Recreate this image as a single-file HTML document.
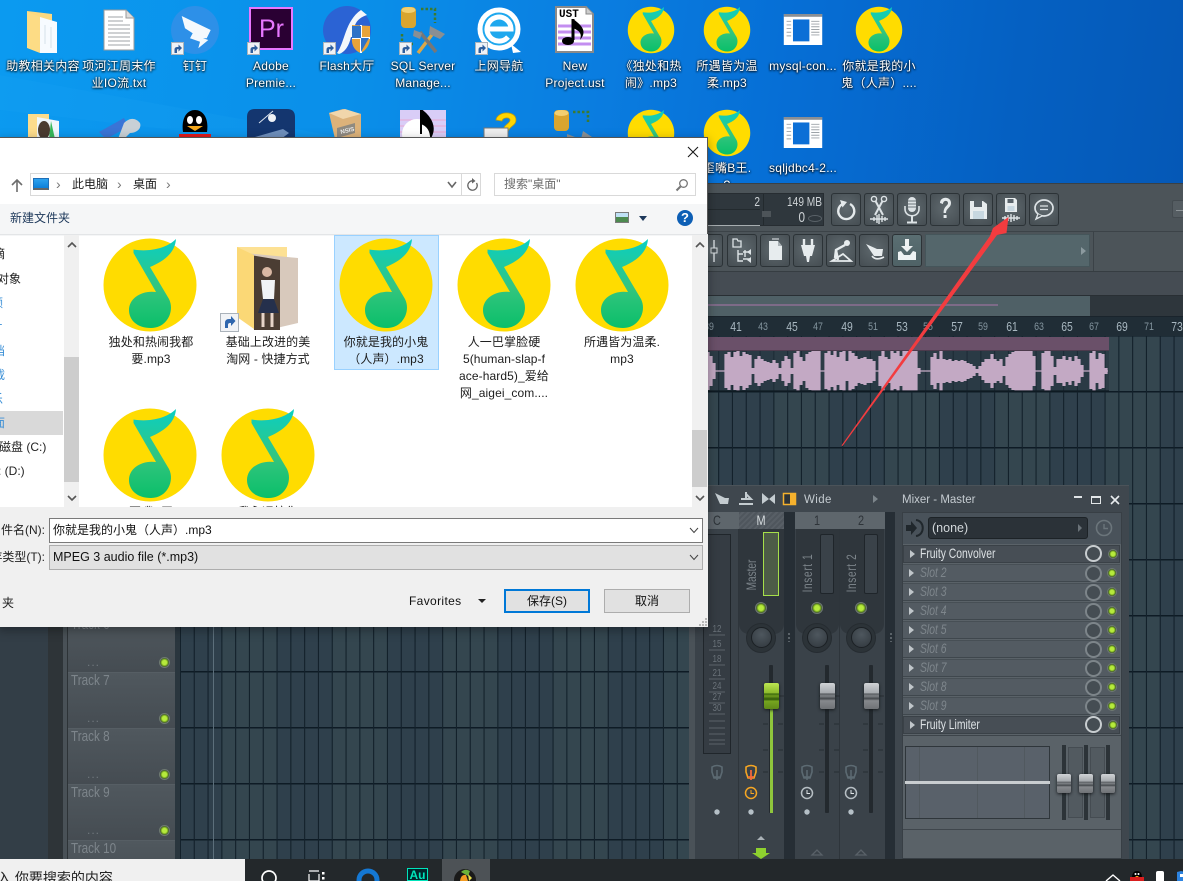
<!DOCTYPE html>
<html lang="zh">
<head>
<meta charset="utf-8">
<title>FL Studio</title>
<style>
html,body{margin:0;padding:0;width:1183px;height:881px;overflow:hidden;background:#0a7fe0}
*{box-sizing:border-box}
#s{position:relative;width:1183px;height:881px;overflow:hidden;font:12px "Liberation Sans","Noto Sans CJK SC",sans-serif;color:#222}
.a,svg.a{position:absolute;display:block}
.dl{position:absolute;width:76px;text-align:center;color:#fff;font-size:12px;line-height:17px;text-shadow:0 1px 2px #000,0 0 2px rgba(0,0,0,.85);white-space:nowrap;letter-spacing:.25px}
.fl{position:absolute;width:110px;text-align:center;color:#1c1c1c;font-size:12px;line-height:17px;white-space:nowrap;letter-spacing:.1px}
.nv{position:absolute;left:-40px;width:60px;text-align:right;color:#222;font-size:12px;line-height:16px;white-space:nowrap}
.tb{position:absolute;width:30px;height:33px;border:1px solid #2c3337;border-radius:3px;background:radial-gradient(circle at 50% 45%,#5f696e,#454d52)}
.tb svg{position:absolute;left:0;top:0;width:28px;height:31px}
.n{transform:scaleX(.78)}
.led{position:absolute;width:11px;height:11px;border-radius:50%;background:radial-gradient(circle,#b6ea3c 0 35%,#6d9c1e 55%,#3c4a3a 70%);border:1px solid #6f7a72}
.tn{position:absolute;top:317px;width:24px;text-align:center;color:#a9b8c1;font-size:13px;line-height:19px;transform:scaleX(.8)}
.tn.s{font-size:11px;color:#84959f;line-height:20px}
.trk{position:absolute;left:68px;width:107px;height:56px;background:linear-gradient(#50585e,#454c52);border-top:1px solid #565e64}
.trk b{position:absolute;left:3px;top:-1px;font-weight:400;font-size:15px;line-height:17px;color:#7d858b;transform:scaleX(.78);transform-origin:left;white-space:nowrap}
.trk i{position:absolute;left:19px;top:40px;font:400 12px/10px "Liberation Sans";color:#6f777d;letter-spacing:1px}
.sl{position:absolute;left:903px;width:217px;height:18px;background:#535b62;border-top:1px solid #474f55;border-bottom:1px solid #3f474d}
.sl.on{background:#474e55;border:1px solid #3a4147}
.sl span{position:absolute;left:17px;top:-2px;font-style:italic;font-size:14px;line-height:18px;color:#7e868c;transform:scaleX(.74);transform-origin:left;white-space:nowrap}
.sl.on span{font-style:normal;color:#dce1e4;left:16px;top:-2px}
.sl u{position:absolute;left:6px;top:4px;width:0;height:0;border-left:5px solid #c0c6ca;border-top:4px solid transparent;border-bottom:4px solid transparent}
.sl s{position:absolute;left:182px;top:0;width:17px;height:17px;border-radius:50%;border:2px solid #7d858a;background:#454d53}
.sl.on s{border-color:#c8cdd0;left:181px;top:-1px}
.sl .led{left:204px;top:3px;width:10px;height:10px}
.hd{position:absolute;width:15px;height:26px;border-radius:2px;box-shadow:0 1px 3px #15191c;background:linear-gradient(#d0d3d6 0,#a6aaae 38%,#5a5e62 42%,#7e8286 50%,#45494d 60%,#86898d 68%,#6f7276 100%)}
.hd.g{background:linear-gradient(#bde652 0,#8dbb2c 38%,#3c6a0c 42%,#6f9c1d 50%,#2f5808 62%,#76a41f 70%,#5f8a18 100%)}
.sc{position:absolute;font-size:10px;line-height:11px;color:#6a7279;width:20px;text-align:center;left:707px;transform:scaleX(.8)}
.vt{position:absolute;font-size:14px;line-height:14px;color:#7b8389;transform:rotate(-90deg) scaleX(.72);white-space:nowrap;width:70px;text-align:center}
</style>
</head>
<body>
<div id="s">
<svg width="0" height="0" style="position:absolute">
<defs>
<linearGradient id="ng" gradientUnits="userSpaceOnUse" x1="0" y1="-46" x2="0" y2="43"><stop offset="0" stop-color="#0acfc4"/><stop offset=".55" stop-color="#33c57e"/><stop offset="1" stop-color="#0abf6a"/></linearGradient>
<symbol id="qq" viewBox="-50 -50 100 100" overflow="visible"><circle r="46.5" fill="#ffdc00"/><path d="M-16.5-35.5C-2-33 16-36 26-46C25-31 12-23 0-18L19 14C25 26 17 43 1 43C-13 43-21 35-21 25C-21 13-8 5 6 7L-16.5-32Z" fill="url(#ng)"/></symbol>
<symbol id="win" viewBox="0 0 42 34"><rect width="42" height="34" fill="#c5cacf"/><rect y="3" width="42" height="31" fill="#fff"/><rect width="42" height="3" fill="#8b8f94"/><rect x="10" y="6" width="18" height="24" fill="#0c6fd6"/><path d="M3 8h5M3 12h5M3 16h5M3 20h5M3 24h5M30 8h9M30 11h9M30 14h9M30 17h9M30 20h9M30 23h9" stroke="#9da3a8"/></symbol>
<symbol id="bd" viewBox="0 0 13 13"><rect x=".5" y=".5" width="12" height="12" fill="#eef2f6" stroke="#a9b3bb"/><path d="M3.5 11V7.5Q3.5 5 6.5 5H7.5V2.5L11 6L7.5 9.5V7H7Q6 7 6 8.5V11Z" fill="#2d5f9e"/></symbol>
</defs>
</svg>

<!-- desktop -->
<div class="a" style="left:0;top:0;width:1183px;height:200px;background:linear-gradient(98deg,#0b9af0 0,#0a8fe9 30%,#0a7de0 50%,#066fd6 65%,#0560c2 85%,#0558b6 100%)"></div>
<svg class="a" style="left:0;top:0" width="1183" height="200"><path d="M0 75L520 170L0 110Z" fill="#1ba6f3" opacity=".18"/></svg>

<!-- row 1 icons -->
<svg class="a" style="left:26px;top:10px" width="34" height="46" viewBox="0 0 34 46"><path d="M1 1L26 4V12L1 12Z" fill="#fdd97f"/><path d="M14 7L31 12V43L14 43Z" fill="#f7fbff"/><path d="M1 2L14 7V43L1 38Z" fill="#fddc85"/><path d="M19 15V34M25 17V38" stroke="#d5e0ea"/></svg>
<svg class="a" style="left:103px;top:9px" width="32" height="42" viewBox="0 0 32 42"><path d="M1 1H23L31 9V41H1Z" fill="#fff" stroke="#9a9a9a"/><path d="M23 1V9H31" fill="#ddd" stroke="#999"/><path d="M5 8H20M5 12H20M5 16H27M5 20H27M5 24H27M5 28H27M5 32H27M5 36H27" stroke="#9fa3a7"/></svg>
<svg class="a" style="left:171px;top:6px" width="48" height="48" viewBox="0 0 48 48"><circle cx="24" cy="24" r="24" fill="#2d90e8"/><path d="M10.7 10L39.7 24L35.7 32.3L32 32.3L37.3 34L27.3 42.3L29 35.7L19 32.3L21.7 27.3L14 22.3Z" fill="#f5f9fd"/></svg>
<svg class="a" style="left:171px;top:42px" width="13" height="13"><use href="#bd"/></svg>
<svg class="a" style="left:249px;top:7px" width="44" height="43" viewBox="0 0 44 43"><rect x="1" y="1" width="42" height="41" fill="#2a0033" stroke="#e877ff" stroke-width="2"/><text x="10" y="30" font-family="Liberation Sans" font-size="25" fill="#e877ff">Pr</text></svg>
<svg class="a" style="left:247px;top:42px" width="13" height="13"><use href="#bd"/></svg>
<svg class="a" style="left:323px;top:6px" width="48" height="48" viewBox="0 0 48 48"><circle cx="24" cy="24" r="24" fill="#2b63d4"/><path d="M14 47C22 36 22 15 38 4L44 9C32 13 32 20 30 25L35 25L30 31L28 31C26 40 22 46 16 48Z" fill="#f3f7fb"/><path d="M29 19L47 20V32C47 41 40 46 38 47C34 46 28 41 29 32Z" fill="#e8a33a"/><path d="M38 19V47M29 32H47" stroke="#fff" stroke-width="2"/><path d="M29 20H38V32H29ZM38 32H46L38 46Z" fill="#2e72c8"/></svg>
<svg class="a" style="left:323px;top:42px" width="13" height="13"><use href="#bd"/></svg>
<svg class="a" style="left:399px;top:6px" width="50" height="50" viewBox="0 0 50 50"><rect x="2" y="1" width="15" height="21" rx="4" fill="#d9a52f"/><ellipse cx="9.5" cy="4" rx="7" ry="3" fill="#f2cf70"/><path d="M22 3H36V17M3 28V35M8 38H14" fill="none" stroke="#3c7a30" stroke-width="2.5" stroke-dasharray="2.5 2"/><path d="M19 47L35 26" stroke="#d9a74a" stroke-width="3.5"/><path d="M37 46L21 26" stroke="#777" stroke-width="3.5"/><path d="M15 24L23 27L21 33L14 30ZM31 20L46 28L41 33L30 28Z" fill="#8a8f93"/></svg>
<svg class="a" style="left:399px;top:42px" width="13" height="13"><use href="#bd"/></svg>
<svg class="a" style="left:477px;top:6px" width="48" height="48" viewBox="0 0 48 48"><circle cx="22" cy="23" r="19" fill="#1fa8ee" stroke="#fff" stroke-width="5"/><path d="M10 23H34A12 12 0 1 0 31 31" fill="none" stroke="#fff" stroke-width="5"/><path d="M34 38L44 46L36 47Z" fill="#fff"/></svg>
<svg class="a" style="left:475px;top:42px" width="13" height="13"><use href="#bd"/></svg>
<svg class="a" style="left:555px;top:6px" width="39" height="47" viewBox="0 0 39 47"><path d="M1 1H31L38 8V46H1Z" fill="#fff" stroke="#8a8a8a" stroke-width="2"/><path d="M31 1V8H38" fill="#ccc" stroke="#888"/><path d="M3 20H36M3 26H36M3 32H36M3 38H36" stroke="#c38ef0" stroke-width="3"/><text x="4" y="11" font-family="Liberation Mono" font-weight="700" font-size="11" fill="#000">UST</text><path d="M18 13V34" stroke="#000" stroke-width="3"/><ellipse cx="13" cy="35" rx="6" ry="4" fill="#000"/><path d="M18 13C28 20 32 26 25 34C28 26 22 24 18 22Z" fill="#000"/></svg>
<svg class="a" style="left:626px;top:5px" width="50" height="50"><use href="#qq"/></svg>
<svg class="a" style="left:702px;top:5px" width="50" height="50"><use href="#qq"/></svg>
<svg class="a" style="left:782px;top:14px" width="42" height="31"><use href="#win"/></svg>
<svg class="a" style="left:854px;top:5px" width="50" height="50"><use href="#qq"/></svg>

<div class="dl" style="left:5px;top:58px">助教相关内容</div>
<div class="dl" style="left:81px;top:58px">项河江周末作<br>业IO流.txt</div>
<div class="dl" style="left:157px;top:58px">钉钉</div>
<div class="dl" style="left:233px;top:58px">Adobe<br>Premie...</div>
<div class="dl" style="left:309px;top:58px">Flash大厅</div>
<div class="dl" style="left:385px;top:58px">SQL Server<br>Manage...</div>
<div class="dl" style="left:461px;top:58px">上网导航</div>
<div class="dl" style="left:537px;top:58px">New<br>Project.ust</div>
<div class="dl" style="left:613px;top:58px">《独处和热<br>闹》.mp3</div>
<div class="dl" style="left:689px;top:58px">所遇皆为温<br>柔.mp3</div>
<div class="dl" style="left:765px;top:58px">mysql-con...</div>
<div class="dl" style="left:841px;top:58px">你就是我的小<br>鬼（人声）....</div>

<!-- row 2 icons -->
<svg class="a" style="left:27px;top:113px" width="34" height="26" viewBox="0 0 34 26"><path d="M1 1H22V26H1Z" fill="#fcdc8c"/><path d="M10 4L32 8V26H10Z" fill="#eef6fb"/><ellipse cx="17" cy="17" rx="6" ry="9" fill="#4a3b30"/><path d="M24 8L28 26H22Z" fill="#36b85a"/></svg>
<svg class="a" style="left:98px;top:115px" width="44" height="24" viewBox="0 0 44 24"><path d="M1 17L26 3L30 12L8 24Z" fill="#3a74d6"/><path d="M26 8C32 2 38 3 42 8C44 14 38 18 32 18L26 24H20Z" fill="#c8d0d6"/></svg>
<svg class="a" style="left:176px;top:110px" width="38" height="30" viewBox="0 0 38 30"><path d="M7 22C5 8 11 0 19 0S33 8 31 22Z" fill="#000"/><ellipse cx="14" cy="10" rx="3" ry="4" fill="#fff"/><ellipse cx="23" cy="10" rx="3" ry="4" fill="#fff"/><path d="M11 16H27L19 21Z" fill="#f5a81c"/><path d="M3 30V24H35V30Z" fill="#e11a1a"/></svg>
<svg class="a" style="left:247px;top:109px" width="48" height="30" viewBox="0 0 48 30"><path d="M8 0H40Q48 0 48 8V30H0V8Q0 0 8 0Z" fill="#14366f"/><circle cx="25" cy="9" r="4" fill="#eef2f7"/><path d="M8 28L36 20L42 24L34 30H8Z" fill="#6f8fbc"/><path d="M12 14L26 2" stroke="#dbe4ee"/></svg>
<svg class="a" style="left:325px;top:109px" width="44" height="30" viewBox="0 0 44 30"><path d="M4 4L18 0L36 5L36 30H10Z" fill="#dcb27a"/><path d="M4 4L18 10L36 5L20 0Z" fill="#f1d6ab"/><path d="M12 19L30 14V24L12 29Z" fill="#8f8a80"/><text x="16" y="25" font-size="6" font-family="Liberation Sans" font-weight="700" fill="#eee" transform="rotate(-14 16 25)">NSIS</text></svg>
<svg class="a" style="left:400px;top:110px" width="46" height="30" viewBox="0 0 46 30"><rect width="46" height="30" fill="#d9cdf7"/><path d="M0 10H46M0 16H46M0 22H46" stroke="#e8a7d2"/><circle cx="17" cy="24" r="15" fill="#fff"/><path d="M21 0V24M21 0C32 8 35 18 31 26C30 18 26 15 21 13Z" fill="#000" stroke="#000" stroke-width="2"/></svg>
<svg class="a" style="left:483px;top:112px" width="36" height="27" viewBox="0 0 36 27"><path d="M13 8C14-1 33-2 33 8C33 14 26 14 25 20H20C20 12 27 12 27 8C27 5 20 5 19 9Z" fill="#ffd500" stroke="#b79a16" stroke-width=".8"/><rect x="1" y="16" width="24" height="11" fill="#eeeeee" stroke="#777"/></svg>
<svg class="a" style="left:553px;top:109px" width="46" height="30" viewBox="0 0 46 30"><rect x="1" y="1" width="15" height="21" rx="4" fill="#d9a52f"/><ellipse cx="8.5" cy="4" rx="7" ry="3" fill="#f2cf70"/><path d="M20 3H35V15" stroke="#3c7a30" stroke-width="2.5" stroke-dasharray="2.5 2" fill="none"/><path d="M14 25L22 28L18 30H14ZM30 22L42 30H28Z" fill="#8a8f93"/></svg>
<svg class="a" style="left:626px;top:108px" width="50" height="50"><use href="#qq"/></svg>
<svg class="a" style="left:702px;top:108px" width="50" height="50"><use href="#qq"/></svg>
<svg class="a" style="left:782px;top:117px" width="42" height="31"><use href="#win"/></svg>
<div class="dl" style="left:689px;top:160px">歪嘴B王.<br>?</div>
<div class="dl" style="left:765px;top:160px">sqljdbc4-2...</div>

<!-- FL: grid -->
<div class="a" style="left:0;top:336px;width:1183px;height:523px;background-color:#31434f;background-image:linear-gradient(#0e1b25 1.3px,transparent 1.3px),linear-gradient(90deg,#34464f 50%,#2f404c 50%);background-size:100% 56px,110.4px 100%;background-position:0 55px,.5px 0"></div>
<svg class="a" style="left:0;top:336px" width="1183" height="523"><path d="M0 261.5H1183" stroke="#13212b" stroke-width="523" stroke-dasharray="1.1 12.7" stroke-dashoffset="-0.5" fill="none"/></svg>

<!-- FL: toolbar -->
<div class="a" style="left:0;top:183px;width:1183px;height:48px;background:#4c5459;border-top:1px solid #3a4146"></div>
<div class="a" style="left:0;top:231px;width:1183px;height:40px;background:#4c5459;border-top:1px solid #3c4348"></div>
<div class="a" style="left:0;top:271px;width:1183px;height:25px;background:#454c53;border-top:1px solid #363d42;border-bottom:1px solid #292f34"></div>
<div class="a" style="left:0;top:296px;width:1090px;height:20px;background:#4f6066"></div>
<div class="a" style="left:1090px;top:296px;width:93px;height:20px;background:#2e363c"></div>
<div class="a" style="left:700px;top:304px;width:298px;height:2px;background:#7d6b88"></div>
<div class="a" style="left:0;top:316px;width:1183px;height:20px;background:#202d36;border-top:1px solid #1a242c"></div>
<div class="a" style="left:1093px;top:231px;width:1px;height:40px;background:#3b4247"></div>

<!-- display -->
<div class="a" style="left:700px;top:193px;width:124px;height:33px;background:#2f373d;border:1px solid #272d32"></div>
<div class="a" style="left:700px;top:209px;width:60px;height:1px;background:#232a2e"></div>
<div class="a" style="left:763px;top:194px;width:1px;height:31px;background:#232a2e"></div>
<div class="a" style="left:700px;top:225px;width:60px;height:1px;background:#a7adb0"></div>
<div class="a n" style="left:748px;top:194px;width:12px;font-size:13px;line-height:15px;color:#cdd2d5;text-align:right;transform-origin:right">2</div>
<div class="a n" style="left:770px;top:194px;width:52px;font-size:13px;line-height:15px;color:#cdd2d5;text-align:right;transform-origin:right">149 MB</div>
<div class="a n" style="left:790px;top:210px;width:15px;font-size:15px;line-height:16px;color:#cdd2d5;text-align:right;transform-origin:right">0</div>
<div class="a" style="left:808px;top:215px;width:14px;height:7px;border:1.5px solid #5a6268;border-radius:50%"></div>
<div class="a" style="left:762px;top:211px;width:9px;height:6px;background:#4d5459"></div>

<!-- toolbar row 1 -->
<div class="tb" style="left:831px;top:193px"><svg viewBox="0 0 28 31"><path d="M10.5 10A8 8 0 1 0 18 10" fill="none" stroke="#e5eaec" stroke-width="2.4"/><path d="M8 6L15 8L10.5 13.5Z" fill="#e5eaec"/></svg></div>
<div class="tb" style="left:864px;top:193px"><svg viewBox="0 0 28 31"><circle cx="9" cy="5" r="2.6" fill="none" stroke="#dde3e6" stroke-width="1.4"/><circle cx="19" cy="5" r="2.6" fill="none" stroke="#dde3e6" stroke-width="1.4"/><path d="M10.5 7L18 21M17.5 7L10 21" stroke="#dde3e6" stroke-width="2"/><path d="M5 25H23M9 23V27M12 21V29M14 20V30M17 22V28M20 23V27" stroke="#dde3e6" stroke-width="1.4"/></svg></div>
<div class="tb" style="left:897px;top:193px"><svg viewBox="0 0 28 31"><rect x="10" y="3" width="8" height="15" rx="4" fill="#dde3e6"/><path d="M10 7H18M10 10H18M10 13H18" stroke="#6b7479"/><path d="M7 12V15C7 24 21 24 21 15V12" fill="none" stroke="#dde3e6" stroke-width="1.6"/><path d="M14 22V28M9 28.5H19" stroke="#dde3e6" stroke-width="2"/></svg></div>
<div class="tb" style="left:930px;top:193px"><svg viewBox="0 0 28 31"><path d="M9 9C9 2 20 2 20 9C20 14 15 14 15 19H12.6C12.6 12 17 12 17 9C17 6 12 6 12 10Z" fill="#e5eaec"/><rect x="12.6" y="21" width="3" height="3" fill="#e5eaec"/></svg></div>
<div class="tb" style="left:963px;top:193px"><svg viewBox="0 0 28 31"><path d="M6 7H19L23 10V25H6Z" fill="#e7ecee"/><rect x="10" y="7" width="8" height="6" fill="#59636a"/><rect x="9" y="17" width="11" height="8" fill="#c7d7e0"/></svg></div>
<div class="tb" style="left:996px;top:193px"><svg viewBox="0 0 28 31"><path d="M8 4H18L20 6V18H8Z" fill="#e7ecee"/><rect x="10.5" y="5" width="6" height="4" fill="#59636a"/><rect x="10.5" y="12" width="7" height="5" fill="#c7d7e0"/><path d="M5 24H23M8 22V26M11 21V27M14 20V28M17 21V27M20 22V26" stroke="#dde3e6" stroke-width="1.4"/></svg></div>
<div class="tb" style="left:1029px;top:193px"><svg viewBox="0 0 28 31"><ellipse cx="14" cy="14" rx="9" ry="8" fill="none" stroke="#dde3e6" stroke-width="1.7"/><path d="M10 12H18M10 15.5H18" stroke="#dde3e6" stroke-width="1.3"/><path d="M8 20L6 25L12 22" fill="#4c5459" stroke="#dde3e6" stroke-width="1.4"/></svg></div>
<div class="a" style="left:1172px;top:200px;width:14px;height:18px;background:#555d62;border:1px solid #444b50;border-radius:2px"></div>
<div class="a" style="left:1176px;top:210px;width:7px;height:1px;background:#8d9498"></div>

<!-- toolbar row 2 -->
<div class="tb" style="left:693px;top:234px"><svg viewBox="0 0 28 31"><path d="M20 5V27" stroke="#d9dfe2" stroke-width="1.4"/><rect x="17" y="13" width="6" height="5" fill="#4c5459" stroke="#d9dfe2"/></svg></div>
<div class="tb" style="left:727px;top:234px"><svg viewBox="0 0 28 31"><path d="M5 4H9L10 6H13V12H5Z" fill="none" stroke="#dde3e6" stroke-width="1.3"/><path d="M10 15V26H15M10 19H15M17 15V22M22 17H15M22 24H15" fill="none" stroke="#dde3e6" stroke-width="1.4"/><path d="M19 17L23 14V20ZM19 25L23 22V28Z" fill="#dde3e6"/></svg></div>
<div class="tb" style="left:760px;top:234px"><svg viewBox="0 0 28 31"><path d="M8 6H17L21 11V25H8Z" fill="#e7ecee"/><path d="M11 4H18" stroke="#e7ecee"/><path d="M17 6V11H21" fill="#aab2b6"/></svg></div>
<div class="tb" style="left:793px;top:234px"><svg viewBox="0 0 28 31"><path d="M10 4V10M18 4V10" stroke="#e7ecee" stroke-width="2.4"/><path d="M7 10H21L18 21H16L15 27H13L12 21H10Z" fill="#e7ecee"/></svg></div>
<div class="tb" style="left:826px;top:234px"><svg viewBox="0 0 28 31"><circle cx="20" cy="8" r="3" fill="#e7ecee"/><path d="M18 10L9 15L8 23M9 15L11 25" stroke="#e7ecee" stroke-width="2.4" fill="none"/><path d="M5 26H24L16 19Z" fill="none" stroke="#e7ecee" stroke-width="1.8"/></svg></div>
<div class="tb" style="left:859px;top:234px"><svg viewBox="0 0 28 31"><path d="M6 9L17 14H23L22 21H14Z" fill="#e7ecee"/><path d="M12 21C15 25 20 24 24 22" fill="none" stroke="#e7ecee" stroke-width="1.6"/></svg></div>
<div class="tb" style="left:892px;top:234px;background:linear-gradient(#5a6e72,#4f6266)"><svg viewBox="0 0 28 31"><path d="M12 4H16V11H20L14 17L8 11H12Z" fill="#eef2f3"/><path d="M5 17V25H23V17L20 16L17 20H11L8 16Z" fill="#eef2f3"/></svg></div>
<div class="a" style="left:925px;top:234px;width:165px;height:33px;background:#54666b;border:1px solid #45555a"></div>
<div class="a" style="left:1081px;top:247px;width:0;height:0;border-left:5px solid #8b9a9f;border-top:4px solid transparent;border-bottom:4px solid transparent"></div>

<!-- timeline -->
<div class="tn s" style="left:697px">39</div><div class="tn" style="left:724px">41</div><div class="tn s" style="left:751px">43</div><div class="tn" style="left:780px">45</div><div class="tn s" style="left:806px">47</div><div class="tn" style="left:835px">49</div><div class="tn s" style="left:861px">51</div><div class="tn" style="left:890px">53</div><div class="tn s" style="left:916px">55</div><div class="tn" style="left:945px">57</div><div class="tn s" style="left:971px">59</div><div class="tn" style="left:1000px">61</div><div class="tn s" style="left:1027px">63</div><div class="tn" style="left:1055px">65</div><div class="tn s" style="left:1082px">67</div><div class="tn" style="left:1110px">69</div><div class="tn s" style="left:1137px">71</div><div class="tn" style="left:1165px">73</div>

<!-- clip -->
<div class="a" style="left:700px;top:337px;width:409px;height:14px;background:#6a5069;border-bottom:1px solid #4c3a4c"></div>
<div class="a" style="left:700px;top:351px;width:409px;height:40px;background:#27353f;opacity:.55"></div>
<svg class="a" style="left:0;top:0" width="1183" height="400">
<path d="M700 371H1108" stroke="#c5acc6" stroke-width="1.2"/>
<path fill="none" stroke="#c3a9c4" stroke-width="3.2" d="M708 352v38M711 356v30M714 363v16M726 354v34M729 352v38M732 357v28M735 352v38M738 351v40M741 356v30M744 352v38M747 354v34M750 355v30M753 368v6M756 359v24M759 356v30M762 359v24M765 361v20M768 362v18M771 363v16M774 360v22M777 363v16M780 368v6M783 361v20M786 356v30M789 359v24M792 368v6M795 353v36M798 351v40M801 357v28M804 361v20M807 354v34M810 352v38M813 351v40M816 351v40M819 351v40M826 353v36M829 351v40M832 355v32M835 351v40M838 357v28M841 352v38M844 351v40M847 361v20M850 351v40M853 353v36M856 356v30M859 359v24M862 358v26M865 357v28M868 359v24M871 359v24M874 361v20M880 356v30M883 351v40M886 357v28M889 359v24M892 351v40M895 353v36M898 351v40M901 356v30M904 351v40M907 351v40M910 351v40M913 351v40M916 351v40M919 368v6M932 357v28M935 353v36M938 359v24M941 351v40M944 359v24M947 360v22M950 359v24M953 361v20M956 360v22M959 361v20M962 360v22M965 361v20M968 363v16M971 364v14M974 366v10M977 369v4M980 366v10M983 362v18M986 359v24M989 359v24M992 354v34M995 359v24M998 361v20M1001 359v24M1004 366v10M1007 357v28M1010 354v34M1013 352v38M1016 351v40M1019 351v40M1022 351v40M1025 351v40M1028 351v40M1031 351v40M1034 356v30M1043 353v36M1046 351v40M1049 351v40M1052 356v30M1055 367v8M1058 359v24M1061 359v24M1064 356v30M1067 360v22M1070 357v28M1073 361v20M1076 356v30M1079 359v24M1082 365v12M1091 353v36M1094 351v40M1097 359v24M1100 353v36M1103 354v34M1106 368v6"/>
<path d="M700 391H1109" stroke="#0f1a22" stroke-width="1.3"/>
</svg>

<!-- left tracks -->
<div class="a" style="left:0;top:600px;width:48px;height:259px;background:#333e47"></div>
<div class="a" style="left:48px;top:600px;width:15px;height:259px;background:#2e3438"></div>
<div class="a" style="left:63px;top:600px;width:5px;height:259px;background:#495157;border-right:1px solid #2d3337"></div>
<div class="a" style="left:175px;top:600px;width:5px;height:259px;background:#2a363e"></div>
<div class="a" style="left:213px;top:600px;width:1px;height:259px;background:#5c6f7b"></div>
<div class="trk" style="top:616px"><b>Track 6</b><i>...</i></div>
<div class="trk" style="top:672px"><b>Track 7</b><i>...</i></div>
<div class="trk" style="top:728px"><b>Track 8</b><i>...</i></div>
<div class="trk" style="top:784px"><b>Track 9</b><i>...</i></div>
<div class="trk" style="top:840px"><b>Track 10</b></div>
<div class="led" style="left:159px;top:657px"></div>
<div class="led" style="left:159px;top:713px"></div>
<div class="led" style="left:159px;top:769px"></div>
<div class="led" style="left:159px;top:825px"></div>

<!-- mixer window -->
<div class="a" style="left:689px;top:485px;width:440px;height:374px;background:#3f474e;border-top:1px solid #4b5359"></div>
<div class="a" style="left:689px;top:512px;width:6px;height:347px;background:#4a5258"></div>
<svg class="a" style="left:708px;top:489px" width="100" height="20" viewBox="0 0 100 20"><path d="M7 4L17 9L21 9L20 15L12 15Z" fill="#c4ccd0"/><path d="M38 3V10M33 10H43L38 5M31 15H45" stroke="#c4ccd0" stroke-width="2" fill="none"/><path d="M54 4L61 10L54 15ZM67 5L61 10L67 15Z" fill="#c4ccd0"/><rect x="75.5" y="4.5" width="12" height="11" fill="#2e3439" stroke="#f5b12d" stroke-width="1.5"/><rect x="82" y="4" width="6" height="12" fill="#f5b12d"/></svg>
<div class="a" style="left:804px;top:493px;font-size:11.5px;line-height:14px;color:#c4cbd0;letter-spacing:.4px">Wide</div>
<div class="a" style="left:873px;top:495px;width:0;height:0;border-left:5px solid #7c858b;border-top:4px solid transparent;border-bottom:4px solid transparent"></div>
<div class="a" style="left:902px;top:493px;font-size:11.5px;line-height:14px;color:#c4cbd0">Mixer - Master</div>
<div class="a" style="left:1074px;top:496px;width:8px;height:2px;background:#dfe3e6"></div>
<div class="a" style="left:1091px;top:496px;width:10px;height:8px;border:1px solid #e2e6e8;border-top-width:2px"></div>
<svg class="a" style="left:1109px;top:494px" width="12" height="12"><path d="M2 2L10 10M10 2L2 10" stroke="#e8ecee" stroke-width="1.6"/></svg>

<!-- strips -->
<div class="a" style="left:695px;top:512px;width:89px;height:347px;background:#3a4249"></div>
<div class="a" style="left:795px;top:512px;width:90px;height:347px;background:#3a4249"></div>
<div class="a" style="left:695px;top:512px;width:44px;height:17px;background:#5e666c"></div>
<div class="a" style="left:739px;top:512px;width:45px;height:17px;background:repeating-linear-gradient(135deg,#4f565d 0 2px,#585f66 2px 4px)"></div>
<div class="a" style="left:795px;top:512px;width:90px;height:17px;background:#5e666c"></div>
<div class="a n" style="left:707px;top:512px;width:20px;text-align:center;font-size:14px;line-height:17px;color:#2e3439">C</div>
<div class="a n" style="left:751px;top:512px;width:20px;text-align:center;font-size:14px;line-height:17px;color:#d7dcdf">M</div>
<div class="a n" style="left:807px;top:512px;width:20px;text-align:center;font-size:14px;line-height:17px;color:#2e3439">1</div>
<div class="a n" style="left:851px;top:512px;width:20px;text-align:center;font-size:14px;line-height:17px;color:#2e3439">2</div>
<div class="a" style="left:784px;top:512px;width:11px;height:347px;background:#262e35"></div>
<div class="a" style="left:885px;top:512px;width:10px;height:347px;background:#262e35"></div>
<div class="a" style="left:788px;top:633px;width:2px;height:9px;background:repeating-linear-gradient(#5a6268 0 2px,transparent 2px 4px)"></div>
<div class="a" style="left:890px;top:633px;width:2px;height:9px;background:repeating-linear-gradient(#5a6268 0 2px,transparent 2px 4px)"></div>
<div class="a" style="left:738px;top:529px;width:1px;height:330px;background:#2e353b"></div>
<div class="a" style="left:839px;top:529px;width:1px;height:330px;background:#2e353b"></div>

<div class="a" style="left:739px;top:529px;width:45px;height:105px;background:#2f363c;border-radius:0 0 10px 10px"></div>
<div class="a" style="left:796px;top:529px;width:43px;height:105px;background:#2f363c;border-radius:0 0 10px 10px"></div>
<div class="a" style="left:840px;top:529px;width:44px;height:105px;background:#2f363c;border-radius:0 0 10px 10px"></div>

<div class="a" style="left:763px;top:532px;width:16px;height:64px;background:#4d5c47;border:1.5px solid #a6e04a"></div>
<div class="a" style="left:820px;top:534px;width:14px;height:60px;background:#3a4249;border:1.5px solid #1f252a;border-radius:2px"></div>
<div class="a" style="left:864px;top:534px;width:14px;height:60px;background:#3a4249;border:1.5px solid #1f252a;border-radius:2px"></div>
<div class="vt" style="left:716px;top:568px">Master</div>
<div class="vt" style="left:772px;top:566px;letter-spacing:.9px">Insert 1</div>
<div class="vt" style="left:816px;top:566px;letter-spacing:.9px">Insert 2</div>
<div class="led" style="left:755px;top:602px;width:12px;height:12px"></div>
<div class="led" style="left:811px;top:602px;width:12px;height:12px"></div>
<div class="led" style="left:855px;top:602px;width:12px;height:12px"></div>

<div class="a" style="left:746px;top:623px;width:30px;height:30px;border-radius:50%;background:#2c3338;border:1px solid #262c31"></div>
<div class="a" style="left:751px;top:627px;width:21px;height:21px;border-radius:50%;background:radial-gradient(circle at 50% 35%,#4e575e,#30373d);border:1px solid #1b2024"></div>
<div class="a" style="left:802px;top:623px;width:30px;height:30px;border-radius:50%;background:#2c3338;border:1px solid #262c31"></div>
<div class="a" style="left:807px;top:627px;width:21px;height:21px;border-radius:50%;background:radial-gradient(circle at 50% 35%,#4e575e,#30373d);border:1px solid #1b2024"></div>
<div class="a" style="left:846px;top:623px;width:30px;height:30px;border-radius:50%;background:#2c3338;border:1px solid #262c31"></div>
<div class="a" style="left:851px;top:627px;width:21px;height:21px;border-radius:50%;background:radial-gradient(circle at 50% 35%,#4e575e,#30373d);border:1px solid #1b2024"></div>

<!-- C meter -->
<div class="a" style="left:703px;top:534px;width:28px;height:220px;background:#353c43;border:1.5px solid #20262b"></div>
<div class="sc" style="top:624px">12</div><div class="sc" style="top:639px">15</div><div class="sc" style="top:654px">18</div><div class="sc" style="top:668px">21</div><div class="sc" style="top:681px">24</div><div class="sc" style="top:692px">27</div><div class="sc" style="top:703px">30</div>
<svg class="a" style="left:708px;top:620px" width="20" height="130"><path d="M1 15H17M1 30H17M1 45H17M1 59H17M1 72H17M1 83H17M1 94H17M1 101H17M1 108H17M1 114H17M1 120H17M1 124H17" stroke="#5a6268"/></svg>

<!-- fader tracks -->
<div class="a" style="left:769px;top:665px;width:4px;height:148px;background:#23292e;border-radius:1px"></div>
<div class="a" style="left:770px;top:700px;width:3px;height:113px;background:#8fc63c"></div>
<div class="a" style="left:825px;top:665px;width:4px;height:148px;background:#23292e;border-radius:1px"></div>
<div class="a" style="left:869px;top:665px;width:4px;height:148px;background:#23292e;border-radius:1px"></div>
<svg class="a" style="left:760px;top:690px" width="130" height="100"><path d="M3 6H24M3 34H8M18 34H23M3 60H8M18 60H23M3 82H8M18 82H23M59 6H80M59 34H64M74 34H79M59 60H64M74 60H79M59 82H64M74 82H79M103 6H124M103 34H108M118 34H123M103 60H108M118 60H123M103 82H108M118 82H123" stroke="#272d32"/></svg>
<div class="hd g" style="left:764px;top:683px"></div>
<div class="hd" style="left:820px;top:683px"></div>
<div class="hd" style="left:864px;top:683px"></div>

<!-- send / clock / dots -->
<svg class="a" style="left:700px;top:762px" width="170" height="60" viewBox="0 0 170 60">
<g fill="none" stroke="#5c6a72" stroke-width="1.6"><path d="M12 10V5Q17 2 22 5V10L20 16H14Z"/><path d="M102 10V5Q107 2 112 5V10L110 16H104Z"/><path d="M146 10V5Q151 2 156 5V10L154 16H148Z"/></g>
<path d="M46 10V5Q51 2 56 5V10L54 16H48Z" fill="none" stroke="#f5a623" stroke-width="1.6"/>
<path d="M17 8V18M14 15H20M107 8V18M104 15H110M151 8V18M148 15H154" stroke="#5c6a72" stroke-width="1.5"/>
<path d="M51 8V18M48 15H54" stroke="#f2683c" stroke-width="1.8"/>
<circle cx="51" cy="31" r="5.5" fill="none" stroke="#f5a623" stroke-width="1.5"/><path d="M51 28V31.5H54" stroke="#f5a623" fill="none"/>
<circle cx="107" cy="31" r="5.5" fill="none" stroke="#b7bfc4" stroke-width="1.5"/><path d="M107 28V31.5H110" stroke="#dfe4e6" fill="none"/>
<circle cx="151" cy="31" r="5.5" fill="none" stroke="#b7bfc4" stroke-width="1.5"/><path d="M151 28V31.5H154" stroke="#dfe4e6" fill="none"/>
<g fill="#b5c0c7"><circle cx="17" cy="50" r="2.7"/><circle cx="51" cy="50" r="2.7"/><circle cx="107" cy="50" r="2.7"/><circle cx="151" cy="50" r="2.7"/></g>
</svg>
<svg class="a" style="left:750px;top:830px" width="130" height="29" viewBox="0 0 130 29"><path d="M7 10L11 6L15 10Z" fill="#aab2b7"/><path d="M6 18H16V23H20L11 29L2 23H6Z" fill="#8ed12f"/><path d="M62 25L67 20L72 25ZM106 25L111 20L116 25Z" fill="none" stroke="#596168" stroke-width="1.3"/></svg>

<!-- slot panel -->
<div class="a" style="left:902px;top:512px;width:220px;height:347px;background:#5a6268;border:1px solid #383f45"></div>
<div class="a" style="left:903px;top:513px;width:218px;height:31px;background:#49525a"></div>
<svg class="a" style="left:905px;top:518px" width="20" height="20" viewBox="0 0 20 20"><path d="M1 7H6V3L12 10L6 17V13H1Z" fill="#20272c"/><path d="M11 2C20 3 20 17 11 18" fill="none" stroke="#20272c" stroke-width="2"/></svg>
<div class="a" style="left:928px;top:517px;width:160px;height:22px;background:#2b3238;border:1px solid #1d2327;border-radius:3px;color:#d2d7da;font-size:12.5px;line-height:20px;padding-left:3px">(none)</div>
<div class="a" style="left:1078px;top:524px;width:0;height:0;border-left:4px solid #6a7278;border-top:4px solid transparent;border-bottom:4px solid transparent"></div>
<svg class="a" style="left:1095px;top:519px" width="18" height="18"><circle cx="9" cy="9" r="7.5" fill="none" stroke="#6b757b" stroke-width="1.6"/><path d="M9 5V9.5H13" stroke="#6b757b" fill="none" stroke-width="1.4"/></svg>
<div class="sl on" style="top:545px"><u></u><span>Fruity Convolver</span><s></s><div class="led"></div></div>
<div class="sl" style="top:564px"><u></u><span>Slot 2</span><s></s><div class="led"></div></div>
<div class="sl" style="top:583px"><u></u><span>Slot 3</span><s></s><div class="led"></div></div>
<div class="sl" style="top:602px"><u></u><span>Slot 4</span><s></s><div class="led"></div></div>
<div class="sl" style="top:621px"><u></u><span>Slot 5</span><s></s><div class="led"></div></div>
<div class="sl" style="top:640px"><u></u><span>Slot 6</span><s></s><div class="led"></div></div>
<div class="sl" style="top:659px"><u></u><span>Slot 7</span><s></s><div class="led"></div></div>
<div class="sl" style="top:678px"><u></u><span>Slot 8</span><s></s><div class="led"></div></div>
<div class="sl" style="top:697px"><u></u><span>Slot 9</span><s></s><div class="led"></div></div>
<div class="sl on" style="top:716px"><u></u><span>Fruity Limiter</span><s></s><div class="led"></div></div>
<div class="a" style="left:903px;top:735px;width:218px;height:1px;background:#3d444a"></div>
<div class="a" style="left:905px;top:746px;width:145px;height:73px;background:#59616a;border:1px solid #2f363b"></div>
<div class="a" style="left:919px;top:747px;width:1px;height:71px;background:#51595f"></div>
<div class="a" style="left:977px;top:747px;width:1px;height:71px;background:#51595f"></div>
<div class="a" style="left:1024px;top:747px;width:1px;height:71px;background:#51595f"></div>
<div class="a" style="left:905px;top:781px;width:145px;height:3px;background:#c9cdd0"></div>
<div class="a" style="left:1068px;top:747px;width:15px;height:71px;background:#525a60;border:1px solid #454c52"></div>
<div class="a" style="left:1090px;top:747px;width:15px;height:71px;background:#525a60;border:1px solid #454c52"></div>
<div class="a" style="left:1062px;top:745px;width:4px;height:75px;background:#2c3338"></div>
<div class="a" style="left:1084px;top:745px;width:4px;height:75px;background:#2c3338"></div>
<div class="a" style="left:1106px;top:745px;width:4px;height:75px;background:#2c3338"></div>
<div class="hd" style="left:1057px;top:774px;width:14px;height:19px"></div>
<div class="hd" style="left:1079px;top:774px;width:14px;height:19px"></div>
<div class="hd" style="left:1101px;top:774px;width:14px;height:19px"></div>
<div class="a" style="left:903px;top:829px;width:218px;height:1px;background:#3f464c"></div>

<!-- red arrow -->
<svg class="a" style="left:0;top:0" width="1183" height="881"><path d="M841.5 445.5L990 236L993 228L1008.5 217L1006.5 233L997 235L842.5 446Z" fill="#f33c3f"/></svg>

<!-- dialog -->
<div class="a" style="left:-2px;top:137px;width:710px;height:490px;background:#fff;border:1px solid #555;box-shadow:0 3px 10px rgba(0,0,0,.35);overflow:hidden">
<div class="a" style="left:1px;top:66px;width:708px;height:32px;background:#f5f6f7"></div>
<div class="a" style="left:1px;top:370px;width:708px;height:120px;background:#f0f0f0"></div>
</div>
<svg class="a" style="left:687px;top:146px" width="12" height="12"><path d="M1 1L11 11M11 1L1 11" stroke="#1a1a1a" stroke-width="1.1"/></svg>
<svg class="a" style="left:10px;top:178px" width="14" height="14"><path d="M7 14V2M2 7L7 2L12 7" fill="none" stroke="#6d6d6d" stroke-width="1.6"/></svg>
<div class="a" style="left:30px;top:173px;width:451px;height:23px;background:#fff;border:1px solid #d9d9d9"></div>
<div class="a" style="left:461px;top:174px;width:1px;height:21px;background:#d9d9d9"></div>
<div class="a" style="left:33px;top:178px;width:16px;height:12px;background:linear-gradient(#2ea3ef,#0c7fd8);border:1px solid #1f6fb8;border-bottom:2px solid #666"></div>
<div class="a" style="left:56px;top:176px;color:#777;font-size:14px;line-height:16px">›</div>
<div class="a" style="left:72px;top:176px;font-size:12px;line-height:17px;color:#1c1c1c">此电脑</div>
<div class="a" style="left:117px;top:176px;color:#777;font-size:14px;line-height:16px">›</div>
<div class="a" style="left:133px;top:176px;font-size:12px;line-height:17px;color:#1c1c1c">桌面</div>
<div class="a" style="left:166px;top:176px;color:#777;font-size:14px;line-height:16px">›</div>
<svg class="a" style="left:447px;top:181px" width="10" height="8"><path d="M1 1L5 6L9 1" fill="none" stroke="#666" stroke-width="1.6"/></svg>
<svg class="a" style="left:466px;top:178px" width="13" height="14" viewBox="0 0 13 14"><path d="M10.5 5A4.7 4.7 0 1 1 6.5 2.8" fill="none" stroke="#666" stroke-width="1.3"/><path d="M6 0V5.5L9.5 3Z" fill="#666"/></svg>
<div class="a" style="left:494px;top:173px;width:202px;height:23px;background:#fff;border:1px solid #d9d9d9;color:#6d6d6d;font-size:12px;line-height:21px;padding-left:9px">搜索"桌面"</div>
<svg class="a" style="left:675px;top:178px" width="14" height="14"><circle cx="8.5" cy="5.5" r="3.8" fill="none" stroke="#777" stroke-width="1.3"/><path d="M5.5 8.5L1.5 12.5" stroke="#777" stroke-width="2"/></svg>
<div class="a" style="left:10px;top:210px;font-size:12px;line-height:17px;color:#1e395b">新建文件夹</div>
<div class="a" style="left:615px;top:212px;width:14px;height:11px;background:linear-gradient(#bfe1f5 45%,#4d8a50 45%);border:1px solid #7b7b7b"></div>
<div class="a" style="left:639px;top:216px;width:0;height:0;border-top:5px solid #1e395b;border-left:4px solid transparent;border-right:4px solid transparent"></div>
<div class="a" style="left:677px;top:210px;width:16px;height:16px;border-radius:50%;background:#0d5fb5;color:#fff;font-weight:700;font-size:13px;line-height:16px;text-align:center">?</div>
<div class="a" style="left:0;top:234px;width:708px;height:1px;background:#e3e5e7"></div>

<div class="a" style="left:0;top:235px;width:708px;height:272px;overflow:hidden">
<div class="a" style="left:0;top:176px;width:63px;height:24px;background:#d9d9d9"></div>
<div class="nv" style="top:11px;left:-55px">摘</div>
<div class="nv" style="top:36px;left:-39px">对象</div>
<div class="nv" style="top:60px;left:-57px;color:#3a8fd6">频</div>
<div class="nv" style="top:84px;left:-57px;color:#3a8fd6">片</div>
<div class="nv" style="top:108px;left:-55px;color:#3a8fd6">档</div>
<div class="nv" style="top:132px;left:-55px;color:#3a8fd6">载</div>
<div class="nv" style="top:156px;left:-57px;color:#3a8fd6">乐</div>
<div class="nv" style="top:180px;left:-55px;color:#3a8fd6">面</div>
<div class="a" style="left:-1px;top:204px;width:70px;text-align:left;font-size:12px;line-height:16px;white-space:nowrap">磁盘 (C:)</div>
<div class="a" style="left:-2px;top:228px;font-size:12px;line-height:16px;white-space:nowrap">: (D:)</div>
<div class="a" style="left:64px;top:0;width:15px;height:272px;background:#f0f0f0"></div>
<div class="a" style="left:64px;top:122px;width:15px;height:125px;background:#cdcdcd"></div>
<svg class="a" style="left:67px;top:6px" width="10" height="7"><path d="M1 6L5 2L9 6" fill="none" stroke="#555" stroke-width="1.6"/></svg>
<svg class="a" style="left:67px;top:260px" width="10" height="7"><path d="M1 1L5 5L9 1" fill="none" stroke="#555" stroke-width="1.6"/></svg>
<div class="a" style="left:692px;top:0;width:16px;height:272px;background:#f0f0f0"></div>
<div class="a" style="left:692px;top:195px;width:15px;height:57px;background:#cdcdcd"></div>
<svg class="a" style="left:695px;top:6px" width="10" height="7"><path d="M1 6L5 2L9 6" fill="none" stroke="#555" stroke-width="1.6"/></svg>
<svg class="a" style="left:695px;top:260px" width="10" height="7"><path d="M1 1L5 5L9 1" fill="none" stroke="#555" stroke-width="1.6"/></svg>

<div class="a" style="left:334px;top:0;width:105px;height:135px;background:#cce8ff;border:1px solid #99d1ff"></div>
<svg class="a" style="left:100px;top:0" width="100" height="100"><use href="#qq"/></svg>
<svg class="a" style="left:336px;top:0" width="100" height="100"><use href="#qq"/></svg>
<svg class="a" style="left:454px;top:0" width="100" height="100"><use href="#qq"/></svg>
<svg class="a" style="left:572px;top:0" width="100" height="100"><use href="#qq"/></svg>
<svg class="a" style="left:100px;top:170px" width="100" height="100"><use href="#qq"/></svg>
<svg class="a" style="left:218px;top:170px" width="100" height="100"><use href="#qq"/></svg>

<svg class="a" style="left:220px;top:10px" width="88" height="88" viewBox="0 0 88 88"><path d="M17 2H67V75H34L17 72Z" fill="#fde194"/><path d="M24 8L78 13V78L48 85L24 76Z" fill="#d8c9bc"/><path d="M30 10L60 15V85L34 85Z" fill="#4b3d33"/><circle cx="47" cy="27" r="5" fill="#d9b8a4"/><path d="M41 35H55L54 54H43Z" fill="#f1f3f6"/><path d="M43 54H54L59 68H38Z" fill="#25304c"/><path d="M43 68V82M52 68V82" stroke="#e6d4c8" stroke-width="3"/><path d="M17 2L34 10V84L17 72Z" fill="#fbd876"/><rect x=".5" y="68.5" width="18" height="18" fill="#f1f3f6" stroke="#aab2ba"/><path d="M5 83V78Q5 74 9 74H11V71L15.5 76L11 81V78H10Q8 78 8 80V83Z" fill="#2f66ad"/></svg>
</div>

<div class="fl" style="left:96px;top:334px">独处和热闹我都<br>要.mp3</div>
<div class="fl" style="left:213px;top:334px">基础上改进的美<br>淘网 - 快捷方式</div>
<div class="fl" style="left:331px;top:334px">你就是我的小鬼<br>（人声）.mp3</div>
<div class="fl" style="left:449px;top:334px">人一巴掌脸硬<br>5(human-slap-f<br>ace-hard5)_爱给<br>网_aigei_com....</div>
<div class="fl" style="left:567px;top:334px">所遇皆为温柔.<br>mp3</div>
<div class="a" style="left:0;top:507px;width:708px;height:120px;background:#f0f0f0"></div>
<div class="a" style="left:96px;top:504px;width:110px;height:3px;overflow:hidden;text-align:center;font-size:12px;line-height:17px;color:#1c1c1c">歪嘴B王</div>
<div class="a" style="left:213px;top:504px;width:110px;height:3px;overflow:hidden;text-align:center;font-size:12px;line-height:17px;color:#1c1c1c">我永远拉你</div>

<div class="a" style="left:-40px;top:522px;width:85px;text-align:right;font-size:12px;line-height:17px;white-space:nowrap">件名(N):</div>
<div class="a" style="left:-40px;top:549px;width:85px;text-align:right;font-size:12px;line-height:17px;white-space:nowrap">存类型(T):</div>
<div class="a" style="left:2px;top:595px;font-size:12px;line-height:17px">夹</div>
<div class="a" style="left:49px;top:518px;width:654px;height:25px;background:#fff;border:1px solid #7a7a7a;font-size:12px;line-height:23px;padding-left:3px;color:#111">你就是我的小鬼（人声）.mp3</div>
<svg class="a" style="left:689px;top:527px" width="10" height="8"><path d="M1 1L5 5.5L9 1" fill="none" stroke="#444" stroke-width="1"/></svg>
<div class="a" style="left:49px;top:545px;width:654px;height:25px;background:#e1e1e1;border:1px solid #adadad;font-size:12.5px;line-height:23px;padding-left:3px;color:#111">MPEG 3 audio file (*.mp3)</div>
<svg class="a" style="left:689px;top:554px" width="10" height="8"><path d="M1 1L5 5.5L9 1" fill="none" stroke="#444" stroke-width="1"/></svg>
<div class="a" style="left:409px;top:593px;font-size:12px;line-height:16px;color:#111;letter-spacing:.35px">Favorites</div>
<div class="a" style="left:478px;top:599px;width:0;height:0;border-top:4px solid #222;border-left:4px solid transparent;border-right:4px solid transparent"></div>
<div class="a" style="left:504px;top:589px;width:86px;height:24px;background:#e1e1e1;border:2px solid #0078d7;text-align:center;font-size:12px;line-height:20px;color:#111">保存(S)</div>
<div class="a" style="left:604px;top:589px;width:86px;height:24px;background:#e1e1e1;border:1px solid #adadad;text-align:center;font-size:12px;line-height:22px;color:#111">取消</div>
<svg class="a" style="left:699px;top:618px" width="8" height="8"><path d="M6 0h2v2H6zM3 3h2v2H3zM6 3h2v2H6zM0 6h2v2H0zM3 6h2v2H3zM6 6h2v2H6z" fill="#b7b7b7"/></svg>

<!-- taskbar -->
<div class="a" style="left:0;top:859px;width:1183px;height:22px;background:#23282b"></div>
<div class="a" style="left:0;top:859px;width:245px;height:22px;background:#f0f0f0;overflow:hidden"><div class="a" style="left:-3px;top:10px;font-size:14px;line-height:18px;color:#222;white-space:nowrap">入 你要搜索的内容</div></div>
<svg class="a" style="left:259px;top:868px" width="20" height="13"><circle cx="10" cy="10" r="7" fill="none" stroke="#fff" stroke-width="1.7"/></svg>
<svg class="a" style="left:308px;top:870px" width="18" height="11"><path d="M1 1H11M1 4V11H11V4" fill="none" stroke="#fff" stroke-width="1.2"/><rect x="14" y="2" width="2.5" height="2.5" fill="#fff"/><rect x="14" y="7" width="2.5" height="2.5" fill="#fff"/></svg>
<svg class="a" style="left:356px;top:868px" width="24" height="13"><circle cx="12" cy="12" r="9" fill="none" stroke="#1478d4" stroke-width="5"/></svg>
<div class="a" style="left:407px;top:868px;width:21px;height:13px;background:#00262b;border:1.5px solid #00e4bb;color:#00e4bb;font-size:12px;line-height:13px;font-weight:700;text-align:center">Au</div>
<div class="a" style="left:442px;top:859px;width:48px;height:22px;background:#4d5256"></div>
<svg class="a" style="left:454px;top:868px" width="24" height="13"><circle cx="11" cy="12" r="11" fill="#1a1a1a"/><path d="M7 4Q11 0 16 3L14 8Z" fill="#6cb33a"/><path d="M6 13Q7 6 12 7L14 13Z" fill="#f39c21"/><path d="M14 6L18 10L15 13Z" fill="#e8e04a"/></svg>
<svg class="a" style="left:1104px;top:874px" width="18" height="7"><path d="M2 7L9 1L16 7" fill="none" stroke="#fff" stroke-width="1.4"/></svg>
<svg class="a" style="left:1130px;top:871px" width="14" height="10" viewBox="0 0 14 10"><path d="M2 7C2 2 4 0 7 0S12 2 12 7Z" fill="#000"/><circle cx="5.5" cy="3" r="1" fill="#fff"/><circle cx="8.5" cy="3" r="1" fill="#fff"/><path d="M5 5H9L7 6.5Z" fill="#f5a81c"/><rect x="0" y="6" width="14" height="4" fill="#d81e1e"/></svg>
<div class="a" style="left:1156px;top:871px;width:8px;height:10px;background:#fff;border-radius:2px 2px 0 0"></div>
<svg class="a" style="left:1177px;top:871px" width="8" height="10"><path d="M0 1L4 0L8 1V10H0Z" fill="#2c83e0"/><path d="M3 3H7V6H3Z" fill="#fff"/></svg>
</div>
</body>
</html>
